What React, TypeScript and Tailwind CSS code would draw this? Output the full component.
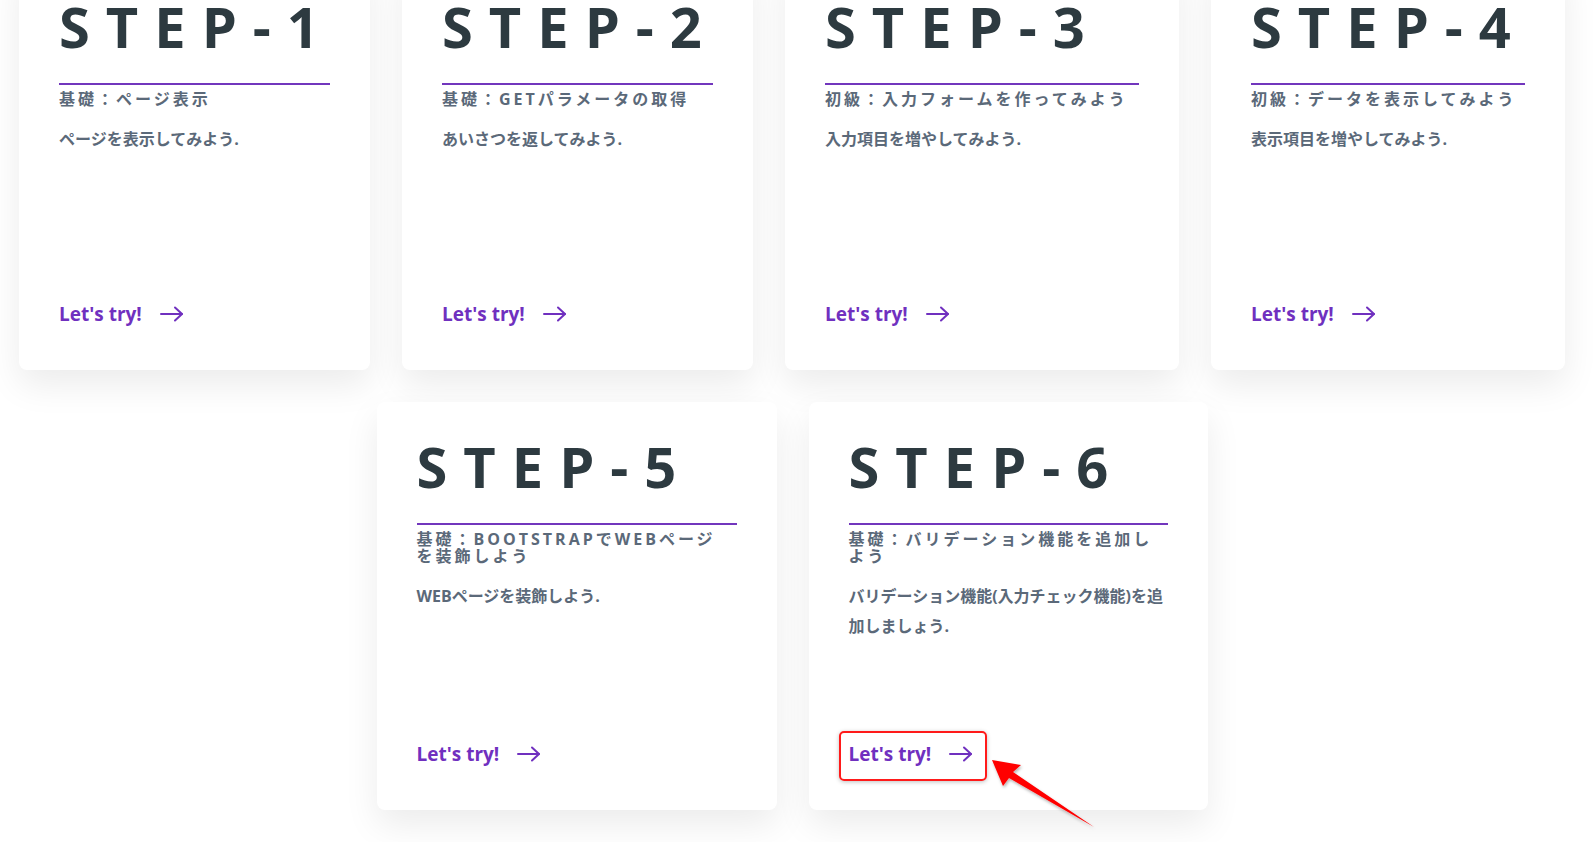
import React from 'react';

const steps = [
  { id: 1, w: 'w-[351px]', sub: '基礎：ページ表示', desc: 'ページを表示してみよう.' },
  { id: 2, w: 'w-[351px]', sub: '基礎：GETパラメータの取得', desc: 'あいさつを返してみよう.' },
  { id: 3, w: 'w-[394px]', sub: '初級：入力フォームを作ってみよう', desc: '入力項目を増やしてみよう.' },
  { id: 4, w: 'w-[354px]', sub: '初級：データを表示してみよう', desc: '表示項目を増やしてみよう.' },
  { id: 5, w: 'w-[400px]', sub: '基礎：BOOTSTRAPでWEBページ\nを装飾しよう', desc: 'WEBページを装飾しよう.' },
  { id: 6, w: 'w-[399px]', sub: '基礎：バリデーション機能を追加しよう', desc: 'バリデーション機能(入力チェック機能)を追加しましょう.', marked: true },
];

const LongArrow = () => (
  <svg width="24" height="16" viewBox="0 0 24 16" fill="none" stroke="currentColor" strokeWidth="2" strokeLinecap="round" strokeLinejoin="round">
    <path d="M1 8h21" />
    <path d="M15 1.5 22 8l-7 6.5" />
  </svg>
);

const RedPointer = () => (
  <svg className="absolute left-[171px] top-[349px] overflow-visible" width="120" height="80" viewBox="0 0 120 80">
    <defs>
      <filter id="ds" x="-20%" y="-20%" width="140%" height="140%">
        <feDropShadow dx="1" dy="2" stdDeviation="1.5" floodColor="#000" floodOpacity="0.3" />
      </filter>
    </defs>
    <polygon points="12,9 41,14 33,21 114,76 29,27 23,35" fill="#ff0000" filter="url(#ds)" />
  </svg>
);

const StepCard = ({ step }: { step: (typeof steps)[number] }) => (
  <div className={`relative flex h-[408px] flex-col rounded-lg bg-white px-10 pt-9 pb-[43px] shadow-[0_15px_35px_rgba(0,0,0,0.08)] ${step.w}`}>
    <h2 className="border-b-2 border-[#7236bd] pb-[29px] text-[56px] leading-none font-bold tracking-[16px] whitespace-nowrap text-[#2d3a40]">
      STEP-{step.id}
    </h2>
    <h3 className="mt-1.5 text-[16px] leading-[17px] font-bold tracking-[3px] whitespace-pre-line text-[#5b6979]">{step.sub}</h3>
    <p className="mt-4 text-[16px] leading-[30px] font-bold text-[#5b6979]">{step.desc}</p>
    <div className="mt-auto">
      <a href="#" className="relative inline-flex items-center gap-[18px] text-[19px] leading-6 font-bold text-[#7030bf]">
        Let's try!
        <LongArrow />
        {step.marked && (
          <span className="absolute -top-[11px] -right-[14px] -bottom-[15px] -left-[10px] rounded-[5px] border-2 border-[#ff1a1a] shadow-[0_1px_4px_rgba(0,0,0,0.25)]" />
        )}
      </a>
    </div>
    {step.marked && <RedPointer />}
  </div>
);

export default function App() {
  return (
    <div className="h-[842px] overflow-hidden bg-white font-['Open_Sans','Noto_Sans_CJK_JP',sans-serif]">
      <div className="-mt-[38px] flex w-[1584px] flex-wrap justify-center gap-8">
        {steps.map((s) => (
          <StepCard key={s.id} step={s} />
        ))}
      </div>
    </div>
  );
}
